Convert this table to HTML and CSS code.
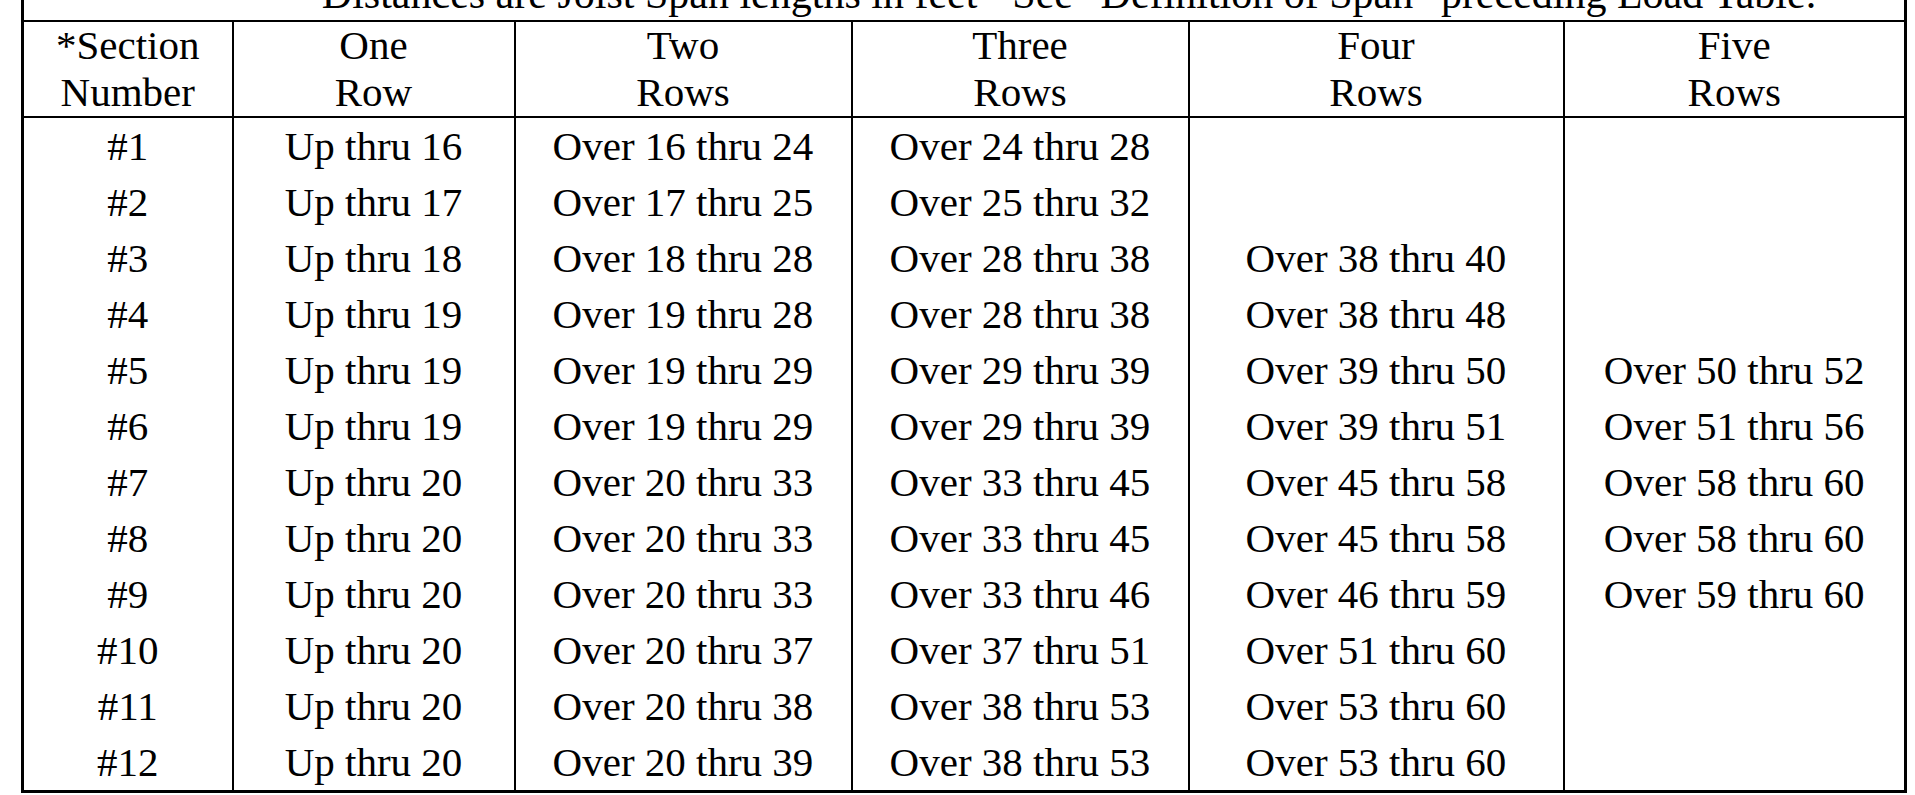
FILE: index.html
```html
<!DOCTYPE html>
<html lang="en">
<head>
<meta charset="utf-8">
<title>Bridging Table</title>
<link rel="stylesheet" href="styles.css">
</head>
<body>
<table class="span-table">
  <colgroup>
    <col class="c-sec">
    <col class="c-one">
    <col class="c-two">
    <col class="c-three">
    <col class="c-four">
    <col class="c-five">
  </colgroup>
  <thead>
    <tr class="title-row">
      <th colspan="6">Distances are Joist Span lengths in feet - See "Definition of Span" preceding Load Table.</th>
    </tr>
    <tr class="head-row">
      <th>*Section<br>Number</th>
      <th>One<br>Row</th>
      <th>Two<br>Rows</th>
      <th>Three<br>Rows</th>
      <th>Four<br>Rows</th>
      <th>Five<br>Rows</th>
    </tr>
  </thead>
  <tbody>
    <tr><td>#1</td><td>Up thru 16</td><td>Over 16 thru 24</td><td>Over 24 thru 28</td><td></td><td></td></tr>
    <tr><td>#2</td><td>Up thru 17</td><td>Over 17 thru 25</td><td>Over 25 thru 32</td><td></td><td></td></tr>
    <tr><td>#3</td><td>Up thru 18</td><td>Over 18 thru 28</td><td>Over 28 thru 38</td><td>Over 38 thru 40</td><td></td></tr>
    <tr><td>#4</td><td>Up thru 19</td><td>Over 19 thru 28</td><td>Over 28 thru 38</td><td>Over 38 thru 48</td><td></td></tr>
    <tr><td>#5</td><td>Up thru 19</td><td>Over 19 thru 29</td><td>Over 29 thru 39</td><td>Over 39 thru 50</td><td>Over 50 thru 52</td></tr>
    <tr><td>#6</td><td>Up thru 19</td><td>Over 19 thru 29</td><td>Over 29 thru 39</td><td>Over 39 thru 51</td><td>Over 51 thru 56</td></tr>
    <tr><td>#7</td><td>Up thru 20</td><td>Over 20 thru 33</td><td>Over 33 thru 45</td><td>Over 45 thru 58</td><td>Over 58 thru 60</td></tr>
    <tr><td>#8</td><td>Up thru 20</td><td>Over 20 thru 33</td><td>Over 33 thru 45</td><td>Over 45 thru 58</td><td>Over 58 thru 60</td></tr>
    <tr><td>#9</td><td>Up thru 20</td><td>Over 20 thru 33</td><td>Over 33 thru 46</td><td>Over 46 thru 59</td><td>Over 59 thru 60</td></tr>
    <tr><td>#10</td><td>Up thru 20</td><td>Over 20 thru 37</td><td>Over 37 thru 51</td><td>Over 51 thru 60</td><td></td></tr>
    <tr><td>#11</td><td>Up thru 20</td><td>Over 20 thru 38</td><td>Over 38 thru 53</td><td>Over 53 thru 60</td><td></td></tr>
    <tr><td>#12</td><td>Up thru 20</td><td>Over 20 thru 39</td><td>Over 38 thru 53</td><td>Over 53 thru 60</td><td></td></tr>
  </tbody>
</table>
</body>
</html>
```

FILE: styles.css
```css
html, body {
  margin: 0;
  padding: 0;
  background: #ffffff;
}

body {
  font-family: "Liberation Serif", "Times New Roman", serif;
  color: #000000;
  overflow: hidden;
}

.span-table {
  border-collapse: collapse;
  table-layout: fixed;
  margin: -31px 0 0 21px;
  border: 3px solid #000;
  font-size: 41px;
}

.c-sec   { width: 210px; }
.c-one   { width: 282px; }
.c-two   { width: 337px; }
.c-three { width: 337px; }
.c-four  { width: 375px; }
.c-five  { width: 342px; }

.span-table th,
.span-table td {
  padding: 0;
  text-align: center;
  font-weight: normal;
  white-space: nowrap;
  border-left: 2px solid #000;
  border-right: 2px solid #000;
}

.title-row th {
  font-size: 42px;
  line-height: 45px;
  padding: 0 0 3px 210px;
  border-bottom: 2px solid #000;
}

.head-row th {
  line-height: 47px;
  border-bottom: 2px solid #000;
}

.span-table td {
  line-height: 56px;
  height: 56px;
}
```
